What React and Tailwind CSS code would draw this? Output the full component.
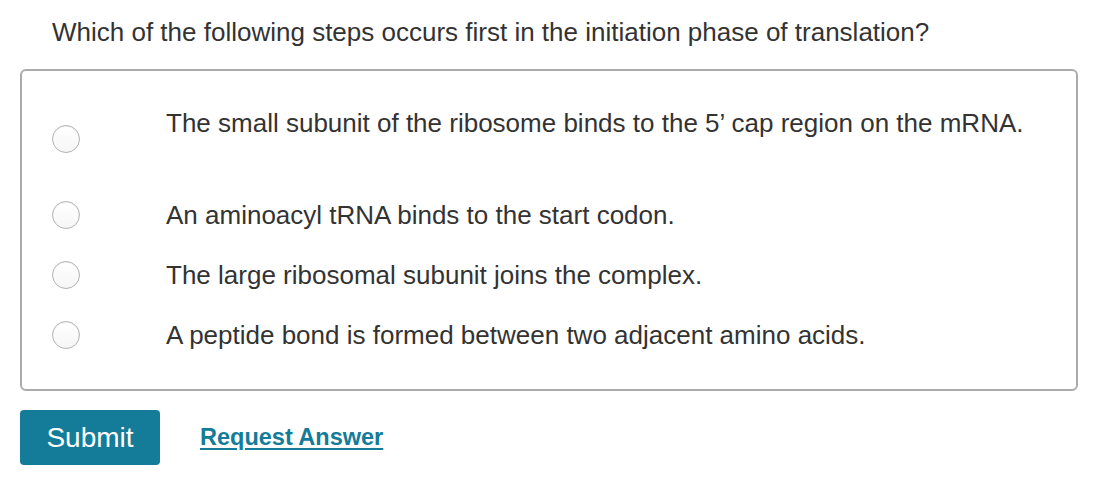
const options = [
  { id: "a", text: "The small subunit of the ribosome binds to the 5’ cap region on the mRNA." },
  { id: "b", text: "An aminoacyl tRNA binds to the start codon." },
  { id: "c", text: "The large ribosomal subunit joins the complex." },
  { id: "d", text: "A peptide bond is formed between two adjacent amino acids." },
];

function Radio() {
  return (
    <span className="block h-[28px] w-[28px] shrink-0 rounded-full border border-[#b3b3b3] bg-gradient-to-b from-white to-[#f6f6f6] shadow-[inset_0_1px_1px_rgba(0,0,0,0.06)]" />
  );
}

export default function App() {
  return (
    <div className="bg-white pt-[14px] font-['Liberation_Sans',Arial,sans-serif] text-[#333]">
      <h2 className="pl-[52px] text-[26px] leading-[36px]">
        Which of the following steps occurs first in the initiation phase of translation?
      </h2>

      <div className="ml-[20px] mr-[24px] mt-[19px] rounded-[6px] border-2 border-[#ababab] pb-[24px] pt-[22px]">
        {options.map((opt, i) => (
          <label key={opt.id} className="flex cursor-pointer items-center">
            <span className="flex w-[144px] shrink-0 pl-[30px]">
              <Radio />
            </span>
            <span className={`flex h-[60px] items-center text-[26px] ${i === 0 ? "mb-[32px]" : ""}`}>
              {opt.text}
            </span>
          </label>
        ))}
      </div>

      <div className="mt-[19px] flex items-center pl-[20px]">
        <button className="h-[55px] w-[140px] rounded-[4px] bg-[#147b98] text-[28px] text-white">
          Submit
        </button>
        <a href="#" className="ml-[40px] text-[23.5px] font-bold text-[#147b98] underline underline-offset-[3px]">
          Request Answer
        </a>
      </div>
    </div>
  );
}
